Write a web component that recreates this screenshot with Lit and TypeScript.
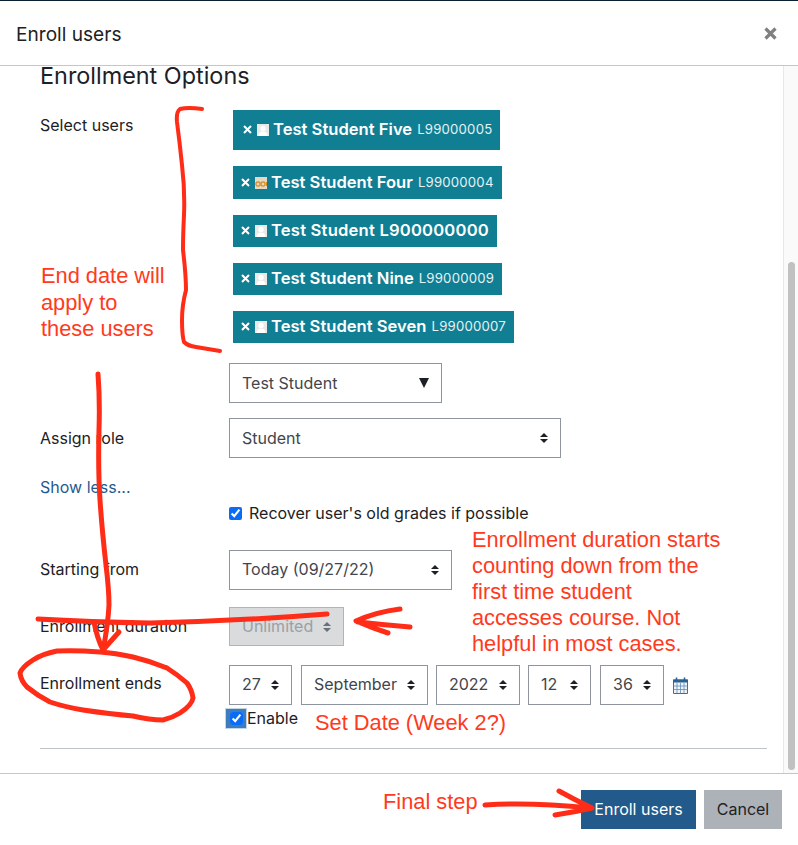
import { LitElement, html, css, svg } from "lit";
import { customElement } from "lit/decorators.js";

const sortIcon = svg`<svg class="sort" width="8" height="10" viewBox="0 0 8 10"><path d="M0 4 L4 0 L8 4Z M0 6 L8 6 L4 10Z" fill="#1d2125"/></svg>`;

const personAvatar = html`<svg class="avatar" viewBox="0 0 12 12"><rect width="12" height="12" fill="#e9e9e9"/><circle cx="6" cy="4.4" r="2.7" fill="#fff"/><path d="M1.5 12 Q2 7.6 6 7.6 Q10 7.6 10.5 12Z" fill="#fff"/></svg>`;
const photoAvatar = html`<svg class="avatar" viewBox="0 0 12 12"><rect width="12" height="12" fill="#e3d9c6"/><circle cx="3" cy="7" r="2.1" fill="none" stroke="#d98a1e" stroke-width="1.2"/><circle cx="8" cy="7" r="2.1" fill="none" stroke="#d98a1e" stroke-width="1.2"/><rect x="11" y="5" width="1" height="4" fill="#d98a1e"/></svg>`;

const tags = [
  { name: "Test Student Five", id: "L99000005", cls: "t1", photo: false },
  { name: "Test Student Four", id: "L99000004", cls: "t2", photo: true },
  { name: "Test Student L900000000", id: "", cls: "t3 wide", photo: false },
  { name: "Test Student Nine", id: "L99000009", cls: "t3", photo: false },
  { name: "Test Student Seven", id: "L99000007", cls: "t3", photo: false },
];

@customElement("app-root")
export class AppRoot extends LitElement {
  static styles = css`
    :host {
      display: block;
      position: relative;
      width: 798px;
      height: 845px;
      overflow: hidden;
      background: #fff;
      font-family: Inter, "Liberation Sans", sans-serif;
      font-size: 16px;
      line-height: 22px;
      color: #1d2125;
    }
    .modal { display: flex; flex-direction: column; height: 100%; border-top: 1px solid #0b1f33; box-sizing: border-box; }
    header {
      flex: none; height: 65px; box-sizing: border-box; border-bottom: 1px solid #c6c6c6;
      display: flex; align-items: center; justify-content: space-between; padding: 0 21px 0 16px;
    }
    header h2 { margin: 2px 0 0; font-size: 19.1px; font-weight: 400; line-height: 24px; }
    .close { display: block; }
    .main { flex: 1; min-height: 0; display: flex; }
    .content { flex: 1; min-width: 0; padding: 0 16px 0 40px; }
    .track { flex: none; width: 15px; box-sizing: border-box; padding: 196px 3px 3px 4px; background: #fafafa; border-left: 1px solid #e8e8e8; }
    .thumb { height: 100%; background: #c1c1c1; border-radius: 4px; }
    h3 { margin: 0 0 24px; font-size: 23.4px; font-weight: 400; line-height: 20px; }
    .row { display: grid; grid-template-columns: 189px 1fr; }
    .row > .lbl { padding-top: 9px; }
    .row > .lbl.first { padding-top: 4px; }
    .row > .lbl.up { padding-top: 8px; }
    .row > .lbl.up2 { padding-top: 7px; }
    .tags { display: flex; flex-direction: column; align-items: flex-start; gap: 16px; margin-left: 4px; }
    .tag {
      display: flex; align-items: center; box-sizing: border-box; background: #107f94; color: #fff;
      font-weight: 600; font-size: 16.6px; line-height: 20px; padding-right: 8px; padding-bottom: 2px;
    }
    .tag.t1 { height: 40px; padding-left: 10px; }
    .tag.t2 { height: 33px; padding-left: 8px; }
    .tag.t3 { height: 32px; padding-left: 8px; }
    .tag.wide { letter-spacing: 0.2px; }
    .tag .x { width: 14px; flex: none; display: block; position: relative; top: 1px; }
    .avatar { width: 12px; height: 12px; flex: none; margin-right: 4px; position: relative; top: 1px; }
    .tag small { font-size: 13.2px; font-weight: 400; margin-left: 5px; color: #e6f2f4; letter-spacing: 0.2px; }
    .sel {
      display: flex; align-items: center; justify-content: space-between; box-sizing: border-box; height: 40px;
      padding: 0 12px; border: 1px solid #8f959e; color: #3f464d; background: #fff;
    }
    .sel.raised { padding-bottom: 2px; }
    .sel.raised svg { position: relative; top: 1px; }
    .w-search { width: 213px; margin-top: 20px; }
    .w-role { width: 332px; }
    .w-start { width: 223px; }
    .w-dur { width: 115px; height: 39px; background: #d9dbdd; border-color: #adb5bd; color: #9aa0a6; }
    .w-d { width: 63px; }
    .w-mon { width: 127px; margin-left: 1px; }
    .w-yr { width: 84px; }
    .w-mi { width: 64px; margin-left: 1px; }
    .rowgap-a { margin-top: 15px; }
    .more { display: block; margin-top: 18px; color: #1f5a8f; text-decoration: none; }
    .check-row { display: flex; align-items: center; gap: 7px; margin-top: 4px; margin-left: 189px; }
    .check-row input { margin: 0; width: 13px; height: 13px; accent-color: #0a6cf5; }
    .rowgap-b { margin-top: 26px; }
    .rowgap-c { margin-top: 17px; }
    .rowgap-d { margin-top: 19px; }
    .date { display: flex; align-items: center; gap: 8px; }
    .cal { display: block; margin-left: 1px; }
    .enable { display: flex; align-items: center; margin: 4px 0 0 -3px; height: 19px; }
    .enable .txt { padding-bottom: 2px; }
    .focus { width: 20px; height: 19px; flex: none; display: flex; align-items: center; justify-content: center; background: #3f7cbc; outline: 1px solid #c2d6ea; margin-right: 1px; }
    .focus input { margin: 0; width: 13px; height: 13px; accent-color: #0a6cf5; }
    hr { border: 0; border-top: 1px solid #bfc3c8; margin: 20px 0 0; }
    footer {
      flex: none; height: 72px; box-sizing: border-box; border-top: 1px solid #c6c6c6;
      display: flex; justify-content: flex-end; align-items: flex-start; gap: 8px; padding: 16px 16px 0 0;
    }
    button { font: inherit; border: 0; height: 39px; padding: 0 0 2px; border-radius: 0; }
    .primary { width: 115px; background: #215a8b; color: #fff; }
    .secondary { width: 78px; background: #adb2b9; color: #1d2125; }

    .ink { position: absolute; inset: 0; pointer-events: none; }
    .ink path { fill: none; stroke: #ff2d17; stroke-width: 4; stroke-linecap: round; stroke-linejoin: round; }
    .ink path.thick { stroke-width: 5; }
    .note { position: absolute; margin: 0; font-family: "Liberation Sans", Arial, sans-serif; font-size: 21.8px; line-height: 26px; color: #ff3a20; white-space: nowrap; pointer-events: none; }
    .n-left { left: 41px; top: 263px; line-height: 26.5px; }
    .n-right { left: 472px; top: 527px; }
    .n-date { left: 315px; top: 710px; }
    .n-final { left: 383px; top: 789px; }
  `;

  render() {
    return html`
      <div class="modal">
        <header>
          <h2>Enroll users</h2>
          <svg class="close" width="13" height="13" viewBox="0 0 13 13"><path d="M1.5 1.5 L11.5 11.5 M11.5 1.5 L1.5 11.5" stroke="#808080" stroke-width="3.2" fill="none"/></svg>
        </header>
        <div class="main">
          <div class="content">
            <h3>Enrollment Options</h3>
            <div class="row">
              <div class="lbl first">Select users</div>
              <div>
                <div class="tags">
                  ${tags.map(
                    (t) => html`<div class="tag ${t.cls}">
                      <svg class="x" viewBox="0 0 14 14" width="14" height="14"><path d="M1 3 L8 10 M8 3 L1 10" stroke="#fff" stroke-width="2" fill="none"/></svg>
                      ${t.photo ? photoAvatar : personAvatar}
                      <span>${t.name}</span>${t.id ? html`<small>${t.id}</small>` : ""}
                    </div>`
                  )}
                </div>
                <div class="sel w-search">
                  <span>Test Student</span>
                  <svg width="10" height="10" viewBox="0 0 10 10"><path d="M0 0 H10 L5 10Z" fill="#1d2125"/></svg>
                </div>
              </div>
            </div>
            <div class="row rowgap-a">
              <div class="lbl">Assign role</div>
              <div class="sel w-role"><span>Student</span>${sortIcon}</div>
            </div>
            <a class="more" href="#">Show less...</a>
            <label class="check-row"><input type="checkbox" checked /><span>Recover user's old grades if possible</span></label>
            <div class="row rowgap-b">
              <div class="lbl up">Starting from</div>
              <div class="sel raised w-start"><span>Today (09/27/22)</span>${sortIcon}</div>
            </div>
            <div class="row rowgap-c">
              <div class="lbl up">Enrollment duration</div>
              <div class="sel raised w-dur"><span>Unlimited</span><svg width="8" height="10" viewBox="0 0 8 10"><path d="M0 4 L4 0 L8 4Z M0 6 L8 6 L4 10Z" fill="#6a7077"/></svg></div>
            </div>
            <div class="row rowgap-d">
              <div class="lbl up2">Enrollment ends</div>
              <div>
                <div class="date">
                  <div class="sel raised w-d"><span>27</span>${sortIcon}</div>
                  <div class="sel raised w-mon"><span>September</span>${sortIcon}</div>
                  <div class="sel raised w-yr"><span>2022</span>${sortIcon}</div>
                  <div class="sel raised w-d"><span>12</span>${sortIcon}</div>
                  <div class="sel raised w-mi"><span>36</span>${sortIcon}</div>
                  <svg class="cal" width="15" height="17" viewBox="0 0 15 17">
                    <path d="M0.5 3 H14.5 V16.5 H0.5Z" fill="#eef3f8" stroke="#3a6f9f"/>
                    <rect x="0" y="2.5" width="15" height="3" fill="#2a6196"/>
                    <path d="M3.5 0.5 V4 M11.5 0.5 V4" stroke="#2a6196" stroke-width="1.6"/>
                    <path d="M0.5 9 H14.5 M0.5 12.5 H14.5 M4 6 V16 M7.5 6 V16 M11 6 V16" stroke="#5f8db8" stroke-width="0.8"/>
                  </svg>
                </div>
                <label class="enable"><span class="focus"><input type="checkbox" checked /></span><span class="txt">Enable</span></label>
              </div>
            </div>
            <hr />
          </div>
          <div class="track"><div class="thumb"></div></div>
        </div>
        <footer>
          <button class="primary">Enroll users</button>
          <button class="secondary">Cancel</button>
        </footer>
      </div>

      <svg class="ink" viewBox="0 0 798 845" width="798" height="845">
        <path d="M202 109 Q188 107 180 109 Q176 112 177 122 Q180 145 182 165 Q185 190 184 215 Q183 235 183 250 Q186 275 186 290 Q182 305 182 320 Q182 335 184 342 Q188 346 196 347 L220 351"/>
        <path class="thick" d="M98 374 Q100 400 99 430 Q98 470 100 500 Q102 530 106 565 Q109 590 109 605 Q108 625 103 650"/>
        <path class="thick" d="M94 622 Q97 638 103 650 Q110 642 119 632"/>
        <path class="thick" d="M38 619 Q90 622 150 623 Q240 621 327 614"/>
        <path class="thick" d="M167 668 Q150 661 133 657 Q115 653 100 652 Q75 650 57 651 Q42 654 33 660 Q22 667 20 673 Q21 681 27 687 Q38 696 50 702 Q65 707 83 710 Q110 714 133 716 Q150 720 163 720 Q172 718 180 713 Q192 705 193 698 Q192 690 187 683 Q178 675 167 668"/>
        <path class="thick" d="M400 609 Q376 612 356 621 Q372 628 388 633 M358 622 Q385 625 410 627"/>
        <path class="thick" d="M485 805 Q530 802 590 808 M559 791 Q575 800 592 808 Q575 812 555 815"/>
      </svg>
      <p class="note n-left">End date will<br />apply to<br />these users</p>
      <p class="note n-right">Enrollment duration starts<br />counting down from the<br />first time student<br />accesses course. Not<br />helpful in most cases.</p>
      <p class="note n-date">Set Date (Week 2?)</p>
      <p class="note n-final">Final step</p>
    `;
  }
}
